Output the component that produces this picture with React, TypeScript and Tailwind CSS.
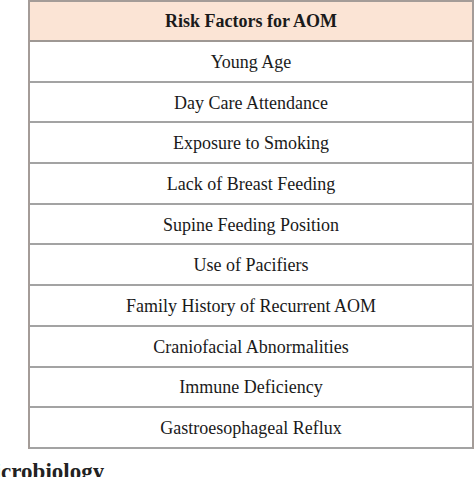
const rows = [
  "Young Age",
  "Day Care Attendance",
  "Exposure to Smoking",
  "Lack of Breast Feeding",
  "Supine Feeding Position",
  "Use of Pacifiers",
  "Family History of Recurrent AOM",
  "Craniofacial Abnormalities",
  "Immune Deficiency",
  "Gastroesophageal Reflux",
];

export default function App() {
  return (
    <div
      className="w-[474px] h-[477px] overflow-hidden bg-white text-[#1a1a1a]"
      style={{ fontFamily: '"Liberation Serif", "DejaVu Serif", serif' }}
    >
      <div className="ml-[28px] w-[446px] border-t-2 border-l-2 border-r-2 border-[#a49c98]">
        <div className="h-[40px] flex items-center justify-center bg-[#fbe4d5] border-b-2 border-[#9e9894] font-bold text-[18px] pt-[1px]">
          Risk Factors for AOM
        </div>
        {rows.map((r) => (
          <div
            key={r}
            className="h-[40.7px] flex items-center justify-center border-b-2 border-[#a3a3a3] text-[18px] pt-[2px]"
          >
            {r}
          </div>
        ))}
      </div>
      <div className="ml-[-27px] mt-[11px] text-[23px] font-semibold leading-none text-[#222] whitespace-nowrap">
        Microbiology
      </div>
    </div>
  );
}
